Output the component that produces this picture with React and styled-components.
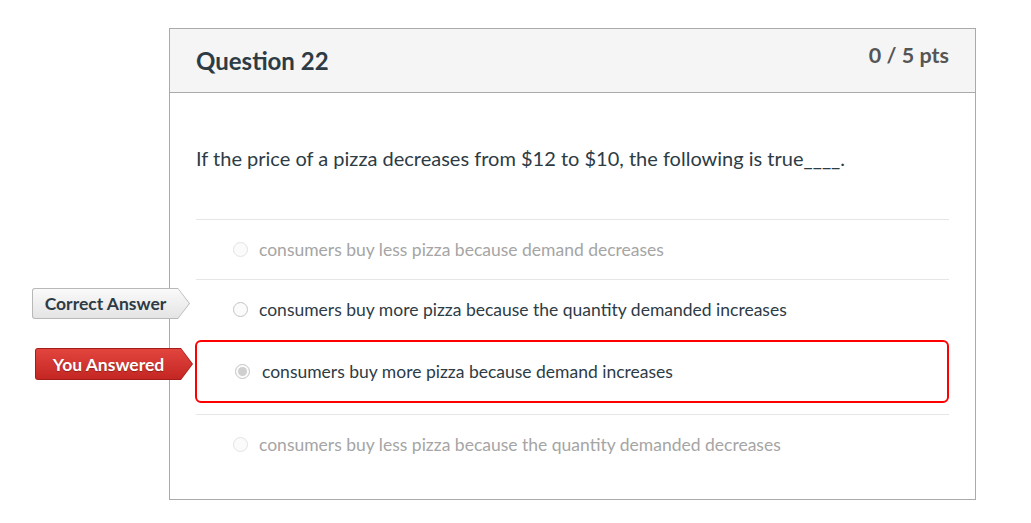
import React from "react";
import styled, { createGlobalStyle } from "styled-components";

const GlobalStyle = createGlobalStyle`
  html, body {
    margin: 0;
    padding: 0;
    background: #ffffff;
  }
  body {
    font-family: "Lato", "Open Sans", sans-serif;
  }
`;

const Page = styled.div`
  padding: 28px 0 0 169px;
`;

const Card = styled.div`
  width: 805px;
  border: 1px solid #aaaaaa;
  background: #ffffff;
`;

const Header = styled.div`
  display: flex;
  justify-content: space-between;
  align-items: flex-start;
  height: 63px;
  padding: 0 26px;
  background: #f5f5f5;
  border-bottom: 1px solid #aaaaaa;
`;

const Title = styled.h2`
  margin: 0;
  padding-top: 17px;
  font-size: 24px;
  font-weight: 700;
  color: #2d3b45;
`;

const Points = styled.div`
  padding-top: 13px;
  font-size: 21.5px;
  font-weight: 700;
  color: #555555;
`;

const Body = styled.div`
  padding: 53px 26px 25px;
`;

const QuestionText = styled.p`
  margin: 0 0 48px;
  font-size: 20px;
  line-height: 25px;
  color: #2d3b45;
`;

const Answers = styled.div`
  display: flex;
  flex-direction: column;
`;

const Row = styled.div`
  position: relative;
  display: flex;
  align-items: center;
  gap: 11px;
  box-sizing: border-box;
  height: 60px;
  padding-left: 37px;
  border-top: 1px solid #e6e6e6;
  color: ${(p) => (p.$dim ? "#a5a5a5" : "#2d3b45")};
  font-size: 17.5px;
`;

const SelectedRow = styled(Row)`
  height: 63px;
  gap: 12px;
  padding-left: 38px;
  border: 2px solid #ff0000;
  border-radius: 6px;
  margin: 1px 0 11px -1px;
`;

const Radio = styled.span`
  flex: none;
  box-sizing: border-box;
  width: 15px;
  height: 15px;
  border-radius: 50%;
  border: 1px solid ${(p) => (p.$dim ? "#e3e3e3" : "#c4c4c4")};
  background: #fbfbfb;
  display: flex;
  align-items: center;
  justify-content: center;
  &::after {
    content: "";
    display: ${(p) => (p.$checked ? "block" : "none")};
    width: 9px;
    height: 9px;
    border-radius: 50%;
    background: #cfcfcf;
  }
`;

const Flag = styled.div`
  position: absolute;
  left: ${(p) => p.$left}px;
  top: ${(p) => p.$top}px;
  width: 158px;
  height: ${(p) => p.$h}px;
  padding: 1px;
  box-sizing: border-box;
  background: ${(p) => (p.$red ? "#a51d1a" : "#b8b8b8")};
  clip-path: polygon(0 0, calc(100% - 12px) 0, 100% 50%, calc(100% - 12px) 100%, 0 100%);
  border-radius: 3px 0 0 3px;
`;

const FlagInner = styled.div`
  height: 100%;
  display: flex;
  align-items: center;
  justify-content: center;
  padding-right: 11px;
  box-sizing: border-box;
  clip-path: polygon(0 0, calc(100% - 11px) 0, 100% 50%, calc(100% - 11px) 100%, 0 100%);
  border-radius: 2px 0 0 2px;
  background: ${(p) =>
    p.$red
      ? "linear-gradient(#e2443e, #c42723)"
      : "linear-gradient(#fafafa, #e4e4e4)"};
  color: ${(p) => (p.$red ? "#ffffff" : "#2d3b45")};
  font-size: 17.5px;
  font-weight: 700;
  white-space: nowrap;
  text-shadow: ${(p) => (p.$red ? "0 1px 1px rgba(0,0,0,0.3)" : "none")};
`;

const answers = [
  { text: "consumers buy less pizza because demand decreases", dim: true },
  {
    text: "consumers buy more pizza because the quantity demanded increases",
    flag: { label: "Correct Answer", red: false, left: -164, top: 8, h: 31 },
  },
  {
    text: "consumers buy more pizza because demand increases",
    selected: true,
    checked: true,
    flag: { label: "You Answered", red: true, left: -162, top: 6, h: 32 },
  },
  { text: "consumers buy less pizza because the quantity demanded decreases", dim: true },
];

export default function App() {
  return (
    <>
      <GlobalStyle />
      <Page>
        <Card>
          <Header>
            <Title>Question 22</Title>
            <Points>0 / 5 pts</Points>
          </Header>
          <Body>
            <QuestionText>
              If the price of a pizza decreases from $12 to $10, the following is true____.
            </QuestionText>
            <Answers>
              {answers.map((a) => {
                const R = a.selected ? SelectedRow : Row;
                return (
                  <R key={a.text} $dim={a.dim}>
                    {a.flag && (
                      <Flag $red={a.flag.red} $left={a.flag.left} $top={a.flag.top} $h={a.flag.h}>
                        <FlagInner $red={a.flag.red}>{a.flag.label}</FlagInner>
                      </Flag>
                    )}
                    <Radio $dim={a.dim} $checked={a.checked} />
                    <span>{a.text}</span>
                  </R>
                );
              })}
            </Answers>
          </Body>
        </Card>
      </Page>
    </>
  );
}
